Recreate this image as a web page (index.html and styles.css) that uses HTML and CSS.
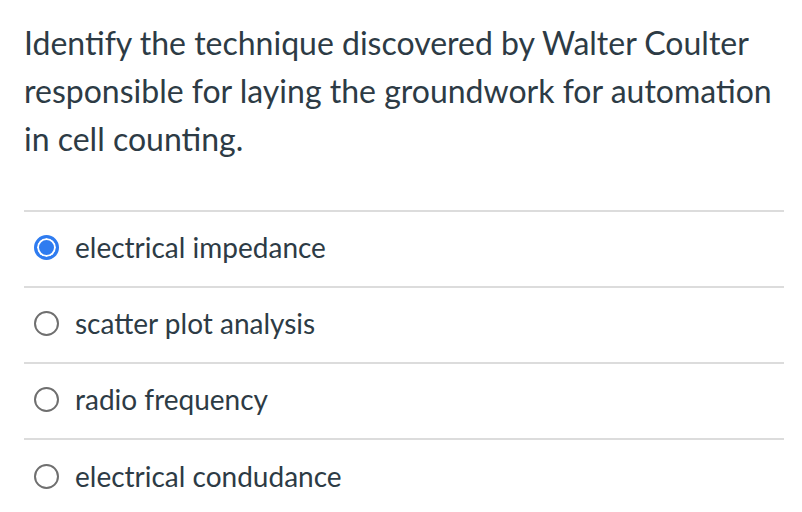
FILE: index.html
```html
<!DOCTYPE html>
<html>
<head>
<meta charset="utf-8">
<link rel="stylesheet" href="styles.css">
</head>
<body>
<div class="quiz">
  <p class="question">Identify the technique discovered by Walter Coulter responsible for laying the groundwork for automation in cell counting.</p>
  <div class="answers">
    <div class="answer"><span class="radio checked"></span><span class="label">electrical impedance</span></div>
    <div class="answer"><span class="radio"></span><span class="label">scatter plot analysis</span></div>
    <div class="answer"><span class="radio"></span><span class="label">radio frequency</span></div>
    <div class="answer"><span class="radio"></span><span class="label">electrical condudance</span></div>
  </div>
</div>
</body>
</html>
```
FILE: styles.css
```css
html, body { margin: 0; padding: 0; background: #fff; }
body { font-family: Lato, "Liberation Sans", sans-serif; color: #2d3b45; }
.quiz { padding: 19px 18px 0 24px; }
.question { margin: 0; font-size: 32px; line-height: 48px; padding-right: 10px; }
.answers { margin-top: 47px; border-top: 2px solid #dcdcdc; }
.answer { display: flex; align-items: center; box-sizing: border-box; height: 76px; padding-bottom: 4px; border-bottom: 2px solid #dcdcdc; padding-left: 10px; }
.answer:last-child { border-bottom: none; }
.radio { width: 25px; height: 25px; border: 2px solid #6f6f6f; border-radius: 50%; box-sizing: border-box; margin-right: 16px; flex: none; }
.radio.checked { border: 3px solid #2f7cf0; background: #2f7cf0; box-shadow: inset 0 0 0 2px #fff; }
.label { font-size: 28px; }
```
